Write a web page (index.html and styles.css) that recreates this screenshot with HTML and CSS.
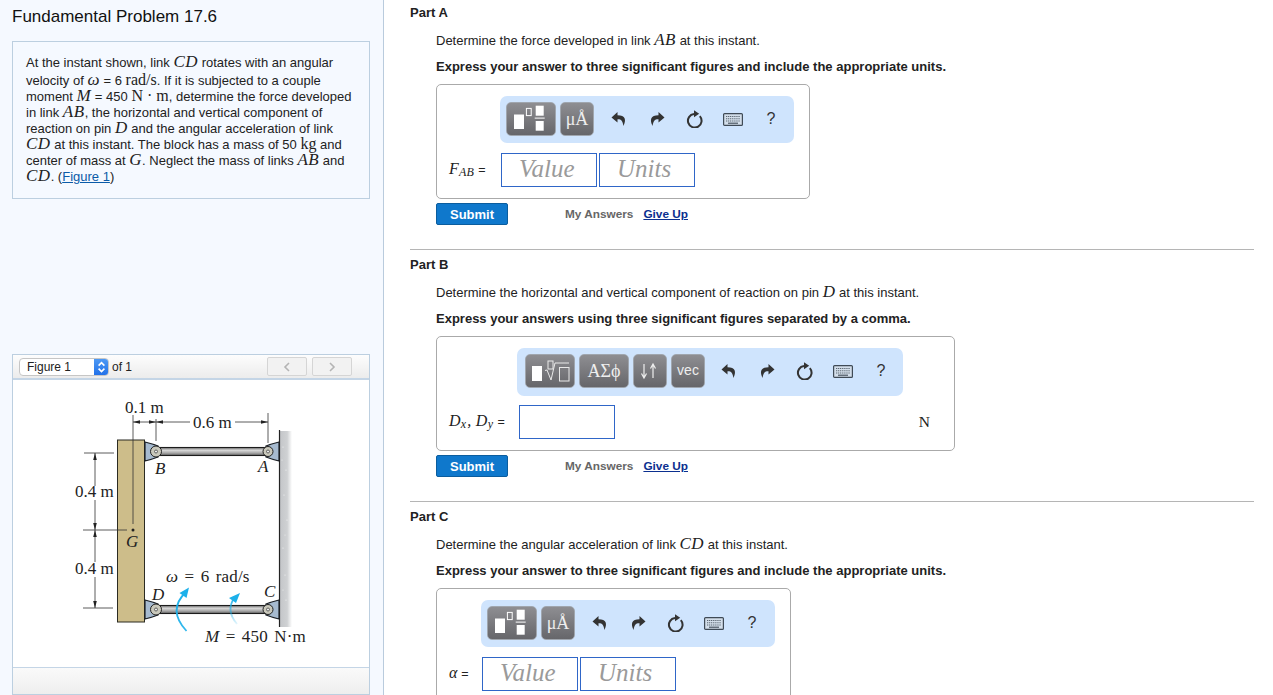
FILE: index.html
```html
<!DOCTYPE html>
<html lang="en">
<head>
<meta charset="utf-8">
<title>Fundamental Problem 17.6</title>
<link rel="stylesheet" href="styles.css">
</head>
<body>
<svg class="defs" xmlns="http://www.w3.org/2000/svg">
  <symbol id="i-undo" viewBox="0 0 16 16"><path d="M6.500 1 L0.500 6.500 L6.500 11.500 L6.500 8.200 C10 8 11.800 9.800 12.400 15 C15.500 9 14.500 4.300 6.500 4.300 Z"/></symbol>
  <symbol id="i-redo" viewBox="0 0 16 16"><path d="M9.500 1 L15.500 6.500 L9.500 11.500 L9.500 8.200 C6 8 4.200 9.800 3.600 15 C0.500 9 1.500 4.300 9.500 4.300 Z"/></symbol>
  <symbol id="i-reset" viewBox="0 0 18 18"><path d="M13.800 6.200 A6.800 6.800 0 1 1 8 4" fill="none" stroke="#333" stroke-width="2"/><path d="M8 0.300 L13.200 3.800 L8 7.200 Z" fill="#333"/></symbol>
  <symbol id="i-keys" viewBox="0 0 20 13"><rect x="0.600" y="0.600" width="18.800" height="11.800" rx="1" fill="#d3deea" stroke="#3f4a56" stroke-width="1.200"/><path d="M3 3.500h14M3 5.800h14M3 8h14" stroke="#5d6873" stroke-width="1.100" stroke-dasharray="1.200 .7"/><path d="M5 10.200h10" stroke="#3f4a56" stroke-width="1.100"/></symbol>
  <symbol id="i-templates" viewBox="0 0 50 34"><rect x="8" y="12.500" width="10" height="14.500" fill="#fff"/><rect x="20.400" y="6.400" width="4.800" height="7.200" fill="none" stroke="#fff" stroke-width="1"/><rect x="29.700" y="3.700" width="8" height="10" fill="#fff"/><rect x="28.700" y="15.600" width="10" height="1" fill="#fff"/><rect x="29.700" y="19" width="8" height="9.700" fill="#fff"/></symbol>
  <symbol id="i-root" viewBox="0 0 50 34"><rect x="7" y="12" width="10" height="15" fill="#fff"/><rect x="23" y="7" width="5" height="8" fill="none" stroke="#e9e9e9" stroke-width="1"/><path d="M20 16.500 L22 16 L26 26 L30 9 H44" fill="none" stroke="#e9e9e9" stroke-width="1"/><rect x="34.500" y="13.500" width="9.500" height="13.500" fill="none" stroke="#e9e9e9" stroke-width="1"/></symbol>
  <symbol id="i-updown" viewBox="0 0 34 34"><path d="M11 10 V23 M8.500 19.500 L11 24 L13.500 19.500 M20 24 V11 M17.500 14.500 L20 10 L22.500 14.500" fill="none" stroke="#eee" stroke-width="1.200"/></symbol>
</svg>

<div class="page">
  <aside class="side">
    <h1 class="problem-title">Fundamental Problem 17.6</h1>
    <div class="statement">
      At the instant shown, link <span class="mi">CD</span> rotates with an angular velocity of <span class="mi">ω</span> = 6 <span class="mr">rad/s</span>. If it is subjected to a couple <span class="strut"></span>moment <span class="mi">M</span> = 450 <span class="mr">N · m</span>, determine the force developed in link <span class="mi">AB</span>, the horizontal and vertical component of reaction on pin <span class="mi">D</span> and the angular acceleration of link <span class="mi">CD</span> at this instant. The block has a mass of 50 <span class="mr">kg</span> and center of mass at <span class="mi">G</span>. Neglect the mass of links <span class="mi">AB</span> and <span class="mi">CD</span>. (<a class="link" href="#">Figure 1</a>)
    </div>
    <section class="figure-panel">
      <div class="figure-head">
        <div class="fig-select"><span class="fig-select-label">Figure 1</span><span class="fig-select-arrows"><svg viewBox="0 0 15 18" width="15" height="18"><path d="M4.600 7.600 L7.500 4.700 L10.400 7.600 M4.600 10.600 L7.500 13.500 L10.400 10.600" fill="none" stroke="#fff" stroke-width="1.600"/></svg></span></div>
        <span class="fig-of">of 1</span>
        <div class="fig-nav">
          <button class="fig-btn"><svg viewBox="0 0 8 10" width="8" height="10"><path d="M6 1 L2 5 L6 9" fill="none" stroke="#b4b4b4" stroke-width="1.600"/></svg></button>
          <button class="fig-btn"><svg viewBox="0 0 8 10" width="8" height="10"><path d="M2 1 L6 5 L2 9" fill="none" stroke="#b4b4b4" stroke-width="1.600"/></svg></button>
        </div>
      </div>
      <div class="figure-body">
        <svg class="diagram" viewBox="13 380 355 287" width="355" height="287" xmlns="http://www.w3.org/2000/svg">
          <defs>
            <linearGradient id="rod" x1="0" y1="0" x2="0" y2="1"><stop offset="0" stop-color="#6f6f6f"/><stop offset=".35" stop-color="#d8d8d8"/><stop offset=".7" stop-color="#a5a5a5"/><stop offset="1" stop-color="#5f5f5f"/></linearGradient>
            <linearGradient id="wall" x1="0" y1="0" x2="1" y2="0"><stop offset="0" stop-color="#c4c6c9"/><stop offset=".6" stop-color="#cfd1d3"/><stop offset="1" stop-color="#ffffff"/></linearGradient>
            <linearGradient id="fade1" gradientUnits="userSpaceOnUse" x1="186" y1="632" x2="188" y2="590"><stop offset="0" stop-color="#1cb0ea" stop-opacity=".9"/><stop offset="1" stop-color="#1cb0ea"/></linearGradient>
            <linearGradient id="fade2" gradientUnits="userSpaceOnUse" x1="237" y1="625" x2="238" y2="597"><stop offset="0" stop-color="#1cb0ea" stop-opacity=".1"/><stop offset="1" stop-color="#1cb0ea"/></linearGradient>
          </defs>
          <rect x="280" y="431" width="12" height="196" fill="url(#wall)"/>
          <g fill="#fff" opacity=".85"><circle cx="283" cy="447" r=".6"/><circle cx="286" cy="470" r=".6"/><circle cx="284" cy="495" r=".6"/><circle cx="287" cy="520" r=".6"/><circle cx="283" cy="548" r=".6"/><circle cx="285" cy="575" r=".6"/><circle cx="286" cy="600" r=".6"/><circle cx="282" cy="460" r=".5"/><circle cx="285" cy="535" r=".5"/><circle cx="283" cy="590" r=".5"/></g>
          <path d="M279.500 430 V627" stroke="#222" stroke-width="1.200" fill="none"/>

          <rect x="117.500" y="440" width="27" height="182" fill="#cdbd8a" stroke="#2b2b22" stroke-width="1"/>

          <g class="dim">
            <path d="M133 415 V524"/>
            <path d="M156 419 V441"/>
            <path d="M268 413 V443"/>
            <path d="M133 422 H190 M235 422 H268"/>
            <path d="M84 453 H114 M83 530 H127 M83 608 H113"/>
            <path d="M95 453 V486 M95 500 V562 M95 577 V608"/>
          </g>
          <g fill="#222">
            <path d="M133 422 l7 -1.800 v3.600z M156 422 l-7 -1.800 v3.600z M156 422 l7 -1.800 v3.600z M268 422 l-7 -1.800 v3.600z"/>
            <path d="M95 453 l-1.800 7 h3.600z M95 530 l-1.800 -7 h3.600z M95 530 l-1.800 7 h3.600z M95 608 l-1.800 -7 h3.600z"/>
            <circle cx="133" cy="530" r="1.500"/>
          </g>

          <g class="rods">
            <rect x="160" y="447.500" width="106" height="8" fill="url(#rod)"/>
            <rect x="160" y="605.500" width="106" height="8" fill="url(#rod)"/>
          </g>
          <g class="clevis">
            <path d="M145 442 Q153 444 158 446 V457 Q153 459 145 461 Z"/>
            <path d="M145 600 Q153 602 158 604 V615 Q153 617 145 619 Z"/>
            <path d="M279 442 Q271 444 266 446 V457 Q271 459 279 461 Z"/>
            <path d="M279 600 Q271 602 266 604 V615 Q271 617 279 619 Z"/>
          </g>
          <g class="pin">
            <circle cx="156" cy="451.500" r="5.500"/><circle cx="156" cy="609.500" r="5.500"/><circle cx="268" cy="451.500" r="5"/><circle cx="268" cy="609.500" r="5"/>
          </g>
          <g class="pin-hole">
            <circle cx="156" cy="451.500" r="1.500"/><circle cx="156" cy="609.500" r="1.500"/><circle cx="268" cy="451.500" r="1.500"/><circle cx="268" cy="609.500" r="1.500"/>
          </g>

          <path d="M186.500 631 Q167 610 186 592" fill="none" stroke="url(#fade1)" stroke-width="1.800"/>
          <path d="M189 587.500 L179.500 593 L186.500 598 Z" fill="#1cb0ea"/>
          <path d="M237 624 Q225 610 235 597" fill="none" stroke="url(#fade2)" stroke-width="1.800"/>
          <path d="M240 593 L229 598 L236 603 Z" fill="#1cb0ea"/>

          <g class="fig-text">
            <text x="125" y="413">0.1 m</text>
            <text x="193" y="428">0.6 m</text>
            <text x="75" y="497">0.4 m</text>
            <text x="75" y="574">0.4 m</text>
            <text x="155" y="474" class="it">B</text>
            <text x="258" y="472" class="it">A</text>
            <text x="126" y="547" class="it">G</text>
            <text x="152" y="600" class="it">D</text>
            <text x="264" y="597" class="it">C</text>
            <text x="166" y="582" class="spaced"><tspan class="it">ω</tspan> = 6 rad/s</text>
            <text x="205" y="642" class="spaced"><tspan class="it">M</tspan> = 450 N·m</text>
          </g>
        </svg>
      </div>
      <div class="figure-foot"></div>
    </section>
  </aside>

  <main class="parts">
    <section class="part">
      <h2 class="part-title">Part A</h2>
      <p class="prompt">Determine the force developed in link <span class="mi">AB</span> at this instant.</p>
      <p class="instr">Express your answer to three significant figures and include the appropriate units.</p>
      <div class="answer answer-a">
        <div class="toolbar toolbar-units">
          <span class="tool tool-wide"><svg width="50" height="34"><use href="#i-templates"/></svg></span>
          <span class="tool tool-unit">μÅ</span>
          <span class="actions">
            <svg class="act" width="16" height="16"><use href="#i-undo"/></svg>
            <svg class="act" width="16" height="16"><use href="#i-redo"/></svg>
            <svg class="act" width="18" height="18"><use href="#i-reset"/></svg>
            <svg class="act" width="20" height="13"><use href="#i-keys"/></svg>
            <span class="act help">?</span>
          </span>
        </div>
        <div class="row">
          <span class="label"><span class="mi mi-label">F</span><span class="mi-sub">AB</span> =</span>
          <input class="field" placeholder="Value">
          <input class="field" placeholder="Units">
        </div>
      </div>
      <div class="controls">
        <button class="submit">Submit</button>
        <span class="my-answers">My Answers</span>
        <a class="give-up" href="#">Give Up</a>
      </div>
    </section>

    <section class="part">
      <h2 class="part-title">Part B</h2>
      <p class="prompt">Determine the horizontal and vertical component of reaction on pin <span class="mi">D</span> at this instant.</p>
      <p class="instr">Express your answers using three significant figures separated by a comma.</p>
      <div class="answer answer-b">
        <div class="toolbar toolbar-math">
          <span class="tool tool-root"><svg width="50" height="34"><use href="#i-root"/></svg></span>
          <span class="tool tool-greek">ΑΣϕ</span>
          <span class="tool tool-arrows"><svg width="34" height="34"><use href="#i-updown"/></svg></span>
          <span class="tool tool-vec">vec</span>
          <span class="actions">
            <svg class="act" width="16" height="16"><use href="#i-undo"/></svg>
            <svg class="act" width="16" height="16"><use href="#i-redo"/></svg>
            <svg class="act" width="18" height="18"><use href="#i-reset"/></svg>
            <svg class="act" width="20" height="13"><use href="#i-keys"/></svg>
            <span class="act help">?</span>
          </span>
        </div>
        <div class="row">
          <span class="label"><span class="mi mi-label">D</span><span class="mi-sub">x</span><span class="mi mi-label">, D</span><span class="mi-sub">y</span> =</span>
          <input class="field">
          <span class="unit-n">N</span>
        </div>
      </div>
      <div class="controls">
        <button class="submit">Submit</button>
        <span class="my-answers">My Answers</span>
        <a class="give-up" href="#">Give Up</a>
      </div>
    </section>

    <section class="part">
      <h2 class="part-title">Part C</h2>
      <p class="prompt">Determine the angular acceleration of link <span class="mi">CD</span> at this instant.</p>
      <p class="instr">Express your answer to three significant figures and include the appropriate units.</p>
      <div class="answer answer-c">
        <div class="toolbar toolbar-units">
          <span class="tool tool-wide"><svg width="50" height="34"><use href="#i-templates"/></svg></span>
          <span class="tool tool-unit">μÅ</span>
          <span class="actions">
            <svg class="act" width="16" height="16"><use href="#i-undo"/></svg>
            <svg class="act" width="16" height="16"><use href="#i-redo"/></svg>
            <svg class="act" width="18" height="18"><use href="#i-reset"/></svg>
            <svg class="act" width="20" height="13"><use href="#i-keys"/></svg>
            <span class="act help">?</span>
          </span>
        </div>
        <div class="row">
          <span class="label"><span class="mi mi-label">α</span> =</span>
          <input class="field" placeholder="Value">
          <input class="field" placeholder="Units">
        </div>
      </div>
    </section>
  </main>
</div>
</body>
</html>
```
FILE: styles.css
```css
* { box-sizing: border-box; }
html, body { margin: 0; height: 100%; overflow: hidden; background: #fff; }
body { font-family: "Liberation Sans", Arial, sans-serif; font-size: 13px; color: #222; }
.defs { display: none; }

.page { display: flex; height: 695px; }

/* left column */
.side { flex: none; width: 384px; height: 695px; padding: 0 13px 0 12px; background: #f5f9ff; border-right: 1px solid #b9cbdd; overflow: hidden; }
.problem-title { margin: 8px 0 0; font-size: 17px; line-height: 18px; font-weight: 400; color: #111; }
.statement { margin-top: 15px; height: 158px; padding: 13px 13px 0; background: #f5f9ff; border: 1px solid #bccfe0; font-size: 13px; line-height: 16px; color: #222; }
.strut { display: inline-block; width: 0; height: 14px; }
.mi { font-family: "Liberation Serif", "Times New Roman", serif; font-style: italic; font-size: 17px; line-height: 0; letter-spacing: .5px; }
.mr { font-family: "Liberation Serif", "Times New Roman", serif; font-size: 16px; line-height: 0; }
.link { color: #0a5ba8; }

.figure-panel { margin-top: 155px; width: 358px; height: 341px; background: #fff; border: 1px solid #bccfe0; display: flex; flex-direction: column; }
.figure-head { flex: none; height: 25px; display: flex; align-items: center; padding: 0 17px 0 6px; background: linear-gradient(#fdfdfd, #ececec); border-bottom: 2px solid #c4d5e6; }
.fig-select { width: 90px; height: 18px; display: flex; background: #fff; border: 1px solid #c6c6c6; border-radius: 4px; overflow: hidden; }
.fig-select-label { flex: 1; padding-left: 7px; font-size: 12px; line-height: 16px; color: #222; }
.fig-select-arrows { flex: none; width: 15px; margin: -1px -1px -1px 0; background: linear-gradient(#4f9bf5, #1f6fe8); }
.fig-select-arrows svg { display: block; }
.fig-of { margin-left: 3px; font-size: 12px; color: #222; }
.fig-nav { margin-left: auto; display: flex; gap: 5px; }
.fig-btn { width: 40px; height: 19px; padding: 0; display: flex; align-items: center; justify-content: center; background: #f2f2f2; border: 1px solid #d5d5d5; border-radius: 2px; }
.figure-body { flex: none; height: 287px; }
.diagram { display: block; }
.figure-foot { flex: 1; background: linear-gradient(#fafafa, #eeeeee); border-top: 1px solid #c4d5e6; }

.dim { stroke: #333; stroke-width: .8; fill: none; }
.rods { stroke: #1c1c1c; stroke-width: 1.100; }
.clevis { fill: #a6bacf; stroke: #1a1e23; stroke-width: 1.200; }
.pin { fill: #c9c8bb; stroke: #222; stroke-width: 1; }
.pin-hole { fill: #eee; stroke: #333; stroke-width: .7; }
.fig-text { font-family: "Liberation Serif", "Times New Roman", serif; font-size: 17px; fill: #222; }
.it { font-style: italic; }
.spaced { word-spacing: 2px; letter-spacing: .15px; }

/* right column */
.parts { flex: 1; min-width: 0; padding: 5px 19px 0 26px; }
.part { margin-bottom: 7px; }
.part-title { margin: 0; font-size: 13px; line-height: 16px; font-weight: 700; color: #222; }
.prompt { margin: 12px 0 0 26px; line-height: 16px; color: #222; }
.instr { margin: 10px 0 0 26px; line-height: 16px; font-weight: 700; color: #222; }

.answer { margin: 9px 0 0 26px; height: 115px; padding: 11px 12px 0; background: #fff; border: 1px solid #aaa; border-radius: 5px; }
.answer-a { width: 374px; }
.answer-b { width: 519px; }
.answer-c { width: 355px; }

.toolbar { display: flex; align-items: flex-start; height: 47px; padding: 6px 0 0 6px; background: #cfe4fd; border-radius: 7px; }
.toolbar-units { width: 294px; }
.toolbar-math { width: 386px; height: 48px; padding-left: 8px; }
.answer-a .toolbar { margin-left: 51px; }
.answer-b .toolbar { margin-left: 68px; }
.answer-c .toolbar { margin-left: 32px; }

.tool { flex: none; height: 34px; display: flex; align-items: center; justify-content: center; color: #eee; background: linear-gradient(#8e8e92, #66666a); border: 1px solid #a0a6ae; border-radius: 5px; font-family: "Liberation Serif", "Times New Roman", serif; font-size: 18px; }
.tool svg { display: block; margin: -1px; flex: none; }
.tool-wide { width: 50px; margin-right: 4px; }
.tool-unit { width: 34px; }
.tool-root { width: 50px; margin-right: 4px; }
.tool-greek { width: 50px; margin-right: 4px; }
.tool-arrows { width: 34px; margin-right: 4px; }
.tool-vec { width: 34px; font-family: "Liberation Sans", Arial, sans-serif; font-size: 14px; padding-bottom: 3px; }

.actions { flex: 1; display: grid; grid-template-columns: repeat(5, 38px); justify-items: center; align-items: center; height: 34px; margin-left: 6px; }
.toolbar-math .actions { margin-left: 5px; }
.act { fill: #333; display: block; }
.help { font-size: 16px; color: #333; }

.row { display: flex; align-items: center; height: 34px; margin-top: 10px; }
.answer-b .row { margin-top: 9px; }
.label { display: block; font-size: 12.5px; color: #222; white-space: nowrap; }
.answer-a .label { width: 52px; }
.answer-b .label { width: 70px; }
.answer-c .label { width: 33px; }
.mi-label { font-size: 16px; letter-spacing: .3px; }
.mi-sub { font-family: "Liberation Serif", "Times New Roman", serif; font-style: italic; font-size: 12px; line-height: 0; vertical-align: -2px; margin-right: 1px; }
.field { width: 96px; height: 34px; margin: 0 2px 0 0; padding: 0 0 2px 17px; border: 1px solid #2f66c8; background: #fff; font-family: "Liberation Serif", "Times New Roman", serif; font-style: italic; font-size: 25px; color: #222; outline: none; border-radius: 0; }
.field::placeholder { color: #9a9a9a; opacity: 1; }
.unit-n { margin-left: auto; margin-right: 12px; font-family: "Liberation Serif", "Times New Roman", serif; font-size: 15.5px; color: #222; }

.controls { display: flex; align-items: center; height: 22px; margin: 4px 0 0 26px; }
.submit { width: 72px; height: 22px; padding: 0; background: #0f78cc; border: 1px solid #0b5d9e; border-radius: 2px; color: #fff; font-family: "Liberation Sans", Arial, sans-serif; font-size: 13px; font-weight: 700; }
.my-answers { margin-left: 57px; font-size: 11.8px; font-weight: 700; color: #666; }
.give-up { margin-left: 10px; font-size: 11.8px; font-weight: 700; color: #0b2f8f; }
.part:not(:last-child) { height: 245px; border-bottom: 1px solid #b5b5b5; }
```
